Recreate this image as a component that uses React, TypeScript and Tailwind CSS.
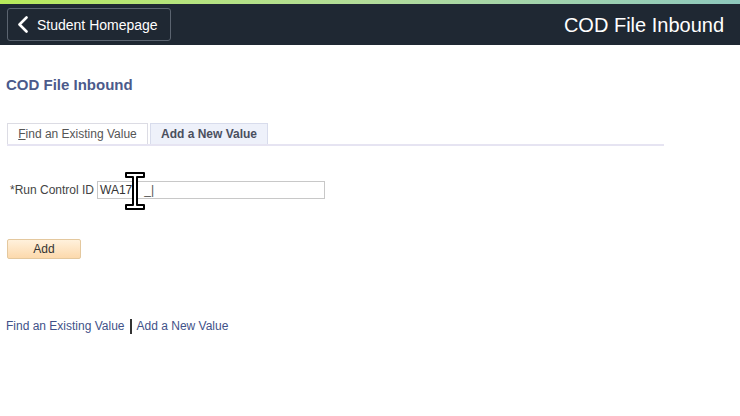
import React from "react";

export default function App() {
  return (
    <div className="relative w-[740px] h-[416px] bg-white overflow-hidden" style={{ fontFamily: '"Liberation Sans", Arial, sans-serif' }}>
      <div className="h-[4px] bg-gradient-to-r from-[#b8ea5a] via-[#b2dc9a] to-[#8ec8bd]" />
      <div className="h-[41px] bg-[#1f2833] flex items-center justify-between pl-[7px] pr-[16px]">
        <div className="h-[33px] w-[164px] border border-[#5b6470] rounded-[3px] flex items-center pl-[9px] gap-[8px] text-white">
          <svg width="12" height="17" viewBox="0 0 12 17" fill="none">
            <path d="M9.5 1.5 L2.5 8.5 L9.5 15.5" stroke="white" strokeWidth="2.6" strokeLinecap="round" strokeLinejoin="round" />
          </svg>
          <span className="text-[14px] leading-none">Student Homepage</span>
        </div>
        <div className="text-white text-[20px] leading-none">COD File Inbound</div>
      </div>

      <div className="pl-[6px] pt-[32px]">
        <div className="text-[15px] font-bold text-[#4b5a8b] leading-none">COD File Inbound</div>
      </div>

      <div className="pl-[7px] pt-[31px] w-[664px]">
        <div className="flex items-end gap-[2px] border-b-[2px] border-[#e6e4f2]">
          <div className="h-[21px] w-[141px] border border-b-0 border-[#dcdce4] bg-white flex items-center justify-center text-[12px] text-[#555]">
            <span><span className="underline">F</span>ind an Existing Value</span>
          </div>
          <div className="h-[21px] w-[118px] border border-b-0 border-[#d8dcec] bg-[#eef1fa] flex items-center justify-center text-[12px] font-bold text-[#4a4f5e]">
            Add a New Value
          </div>
        </div>
      </div>

      <div className="pl-[10px] pt-[35px] flex items-center">
        <span className="text-[12px] text-[#444] mr-[3px]">*Run Control ID</span>
        <div className="h-[18px] w-[228px] border border-[#c8c8c8] bg-white flex items-center pl-[2px] text-[12px] text-[#333]">
          WA17
          <span className="ml-[12px] text-[#555]">_|</span>
        </div>
      </div>

      <div className="pl-[7px] pt-[40px]">
        <div className="h-[20px] w-[74px] rounded-[2px] border border-[#e4c89e] bg-gradient-to-b from-[#fff1dc] to-[#fcd9ac] flex items-center justify-center text-[12px] text-[#333]">
          Add
        </div>
      </div>

      <div className="pl-[6px] pt-[58px] flex items-center text-[12px] text-[#3f5289]">
        <span>Find an Existing Value</span>
        <span className="mx-[5px] h-[15px] w-[2px] bg-[#333]" />
        <span>Add a New Value</span>
      </div>

      <svg className="absolute left-[124px] top-[171px]" width="22" height="40" viewBox="0 0 22 40">
        <path d="M2 2 H20 V6 H13 V34 H20 V38 H2 V34 H9 V6 H2 Z" fill="white" stroke="black" strokeWidth="2" strokeLinejoin="round" />
      </svg>
    </div>
  );
}
